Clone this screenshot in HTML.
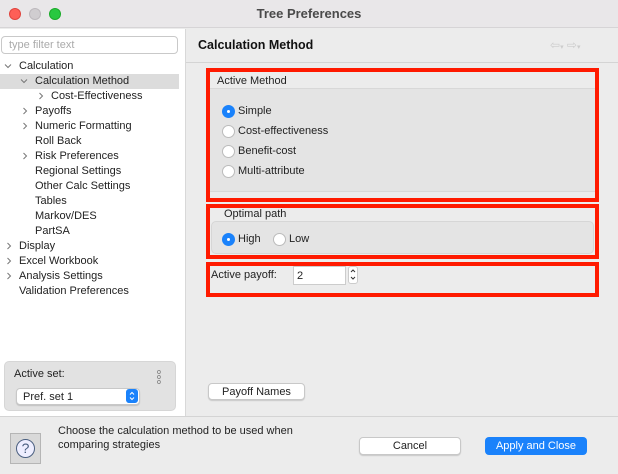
<!DOCTYPE html>
<html><head><style>
*{margin:0;padding:0;box-sizing:border-box}
body{width:618px;height:474px;overflow:hidden;background:#ececec;font-family:"Liberation Sans",sans-serif;font-size:11px;color:#222;position:relative}
.a{position:absolute;line-height:15px;white-space:nowrap}
.title{left:0;top:0;width:618px;height:28px;background:#e9e7e9;border-bottom:1px solid #d6d4d6}
.dot{width:12px;height:12px;border-radius:50%;top:8px}
.left{left:0;top:29px;width:185px;height:387px;background:#fff}
.tree div{position:absolute;height:15px;line-height:15px;white-space:nowrap}
.ch{position:absolute;width:8px;height:8px}
.red{border:4px solid #ff1a00;left:206px;width:393px}
.radio{position:absolute;width:13px;height:13px;border-radius:50%;background:#fff;border:1px solid #bbb}
.radio.on{background:#1a82fb;border-color:#1a82fb}
.radio.on:after{content:"";position:absolute;left:4px;top:4px;width:3px;height:3px;border-radius:50%;background:#fff}
.btn{background:#fff;border:1px solid #c8c8c8;border-radius:4px;text-align:center;box-shadow:0 1px 1px rgba(0,0,0,.15)}
</style></head><body>
<svg width="0" height="0" style="position:absolute"><defs>
<symbol id="r" viewBox="0 0 8 8"><polyline points="2.5,1 5.5,4 2.5,7" fill="none" stroke="#777" stroke-width="1"/></symbol>
<symbol id="d" viewBox="0 0 8 8"><polyline points="1,2.5 4,5.5 7,2.5" fill="none" stroke="#777" stroke-width="1"/></symbol>
</defs></svg>
<div class="a title"></div>
<div class="a dot" style="left:9px;background:#fe5f57;border:1px solid #e0443e"></div>
<div class="a dot" style="left:29px;background:#d0cdd0;border:1px solid #bdb9bd"></div>
<div class="a dot" style="left:49px;background:#28c840;border:1px solid #1aab29"></div>
<div class="a" style="left:0;top:6px;width:618px;text-align:center;font-weight:bold;font-size:13px;color:#4a4a4a">Tree Preferences</div>

<div class="a left"></div>
<div class="a" style="left:1px;top:36px;width:177px;height:18px;border:1px solid #c9c9c9;border-radius:4px;background:#fff;color:#aaa;padding-left:7px;line-height:16px">type filter text</div>
<div class="a" style="left:0;top:74px;width:179px;height:15px;background:#dcdcdc"></div>
<div class="tree">
<div style="left:19px;top:59px">Calculation</div><svg class="ch" style="left:4px;top:62px"><use href="#d"/></svg>
<div style="left:35px;top:74px">Calculation Method</div><svg class="ch" style="left:20px;top:77px"><use href="#d"/></svg>
<div style="left:51px;top:89px">Cost-Effectiveness</div><svg class="ch" style="left:37px;top:92px"><use href="#r"/></svg>
<div style="left:35px;top:104px">Payoffs</div><svg class="ch" style="left:21px;top:107px"><use href="#r"/></svg>
<div style="left:35px;top:119px">Numeric Formatting</div><svg class="ch" style="left:21px;top:122px"><use href="#r"/></svg>
<div style="left:35px;top:134px">Roll Back</div>
<div style="left:35px;top:149px">Risk Preferences</div><svg class="ch" style="left:21px;top:152px"><use href="#r"/></svg>
<div style="left:35px;top:164px">Regional Settings</div>
<div style="left:35px;top:179px">Other Calc Settings</div>
<div style="left:35px;top:194px">Tables</div>
<div style="left:35px;top:209px">Markov/DES</div>
<div style="left:35px;top:224px">PartSA</div>
<div style="left:19px;top:239px">Display</div><svg class="ch" style="left:5px;top:242px"><use href="#r"/></svg>
<div style="left:19px;top:254px">Excel Workbook</div><svg class="ch" style="left:5px;top:257px"><use href="#r"/></svg>
<div style="left:19px;top:269px">Analysis Settings</div><svg class="ch" style="left:5px;top:272px"><use href="#r"/></svg>
<div style="left:19px;top:284px">Validation Preferences</div>
</div>
<div class="a" style="left:4px;top:361px;width:172px;height:50px;background:#e2e2e2;border:1px solid #d6d6d6;border-radius:5px"></div>
<div class="a" style="left:14px;top:367px">Active set:</div>
<div class="a" style="left:157px;top:370px;font-size:7px;line-height:5px;color:#666">o<br>o<br>o</div>
<div class="a btn" style="left:16px;top:388px;width:124px;height:17px;text-align:left;padding-left:6px;line-height:16px">Pref. set 1</div>
<div class="a" style="left:126px;top:389px;width:12px;height:14px;background:#1a82fb;border-radius:3px"><svg width="12" height="14" style="position:absolute;left:0;top:0"><polyline points="4,5.5 6,3.5 8,5.5" fill="none" stroke="#fff" stroke-width="1"/><polyline points="4,8.5 6,10.5 8,8.5" fill="none" stroke="#fff" stroke-width="1"/></svg></div>

<div class="a" style="left:185px;top:29px;width:1px;height:387px;background:#d8d8d8"></div>
<div class="a" style="left:198px;top:38px;font-weight:bold;font-size:12.5px;color:#111">Calculation Method</div>
<div class="a" style="left:550px;top:38px;color:#ccc;font-size:12px">⇦<span style="font-size:7px">▾</span> ⇨<span style="font-size:7px">▾</span></div>
<div class="a" style="left:186px;top:62px;width:432px;height:1px;background:#d4d4d4"></div>

<div class="a" style="left:210px;top:88px;width:385px;height:104px;background:#e4e4e4;border-top:1px solid #d8d8d8;border-bottom:1px solid #d8d8d8"></div>
<div class="a red" style="top:68px;height:134px"></div>
<div class="a" style="left:217px;top:74px">Active Method</div>
<div class="radio on" style="left:222px;top:105px"></div><div class="a" style="left:238px;top:104px">Simple</div>
<div class="radio" style="left:222px;top:125px"></div><div class="a" style="left:238px;top:124px">Cost-effectiveness</div>
<div class="radio" style="left:222px;top:145px"></div><div class="a" style="left:238px;top:144px">Benefit-cost</div>
<div class="radio" style="left:222px;top:165px"></div><div class="a" style="left:238px;top:164px">Multi-attribute</div>

<div class="a red" style="top:204px;height:55px"></div>
<div class="a" style="left:211px;top:221px;width:383px;height:33px;background:#e4e4e4;border:1px solid #d6d6d6;border-radius:5px"></div>
<div class="a" style="left:224px;top:207px">Optimal path</div>
<div class="radio on" style="left:222px;top:233px"></div><div class="a" style="left:238px;top:232px">High</div>
<div class="radio" style="left:273px;top:233px"></div><div class="a" style="left:289px;top:232px">Low</div>

<div class="a red" style="top:262px;height:35px"></div>
<div class="a" style="left:211px;top:268px">Active payoff:</div>
<div class="a" style="left:293px;top:266px;width:53px;height:19px;background:#fff;border:1px solid #ccc;padding-left:3px;line-height:18px">2</div>
<div class="a" style="left:348px;top:266px;width:10px;height:18px;background:#fff;border:1px solid #ccc;border-radius:3px"><svg width="10" height="18" style="position:absolute;left:-1px;top:-1px"><polyline points="3,6 5,4 7,6" fill="none" stroke="#333" stroke-width="1"/><polyline points="3,11 5,13 7,11" fill="none" stroke="#333" stroke-width="1"/></svg></div>

<div class="a btn" style="left:208px;top:383px;width:97px;height:17px;line-height:16px">Payoff Names</div>

<div class="a" style="left:0;top:416px;width:618px;height:1px;background:#d4d4d4"></div>
<div class="a" style="left:10px;top:433px;width:31px;height:31px;background:#d9d9d9;border:1px solid #b5b5b5"></div>
<div class="a" style="left:16px;top:439px;width:19px;height:19px;border:1.5px solid #4a5f80;border-radius:50%;text-align:center;line-height:16px;font-size:14px;color:#4a5f80;background:#eef">?</div>
<div class="a" style="left:58px;top:424px;line-height:14px">Choose the calculation method to be used when<br>comparing strategies</div>
<div class="a btn" style="left:359px;top:437px;width:102px;height:18px;line-height:17px">Cancel</div>
<div class="a" style="left:485px;top:437px;width:102px;height:18px;background:#1a82fb;border-radius:4px;color:#fff;text-align:center;line-height:18px">Apply and Close</div>
</body></html>
